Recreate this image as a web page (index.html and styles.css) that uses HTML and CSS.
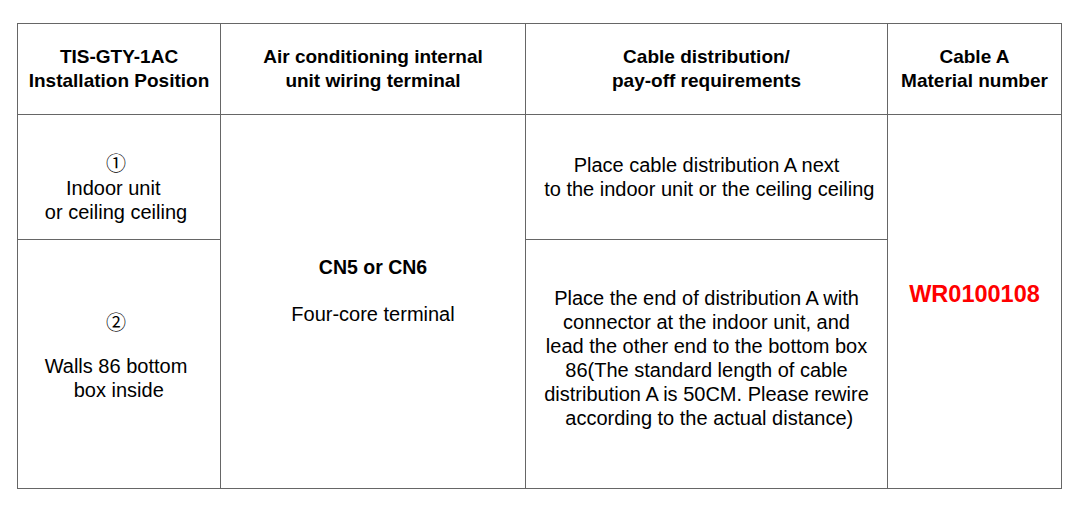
FILE: index.html
```html
<!DOCTYPE html>
<html>
<head>
<meta charset="utf-8">
<link rel="stylesheet" href="styles.css">
</head>
<body>
<div class="page">
  <table class="spec">
    <colgroup>
      <col class="c1"><col class="c2"><col class="c3"><col class="c4">
    </colgroup>
    <tr class="head">
      <th>TIS-GTY-1AC<br>Installation Position</th>
      <th>Air conditioning internal<br>unit wiring terminal</th>
      <th>Cable distribution/<br>pay-off requirements</th>
      <th>Cable A<br>Material number</th>
    </tr>
    <tr class="r2">
      <td class="pos1"><span class="num">①</span><br>Indoor unit&nbsp;<br>or ceiling ceiling</td>
      <td rowspan="2" class="term"><div class="cn">CN5 or CN6</div><div class="fc">Four-core terminal</div></td>
      <td>Place cable distribution A next<br>&nbsp;to the indoor unit or the ceiling ceiling</td>
      <td rowspan="2" class="mat">WR0100108</td>
    </tr>
    <tr class="r3">
      <td class="pos2"><div class="num2">②</div>Walls 86 bottom<br>&nbsp;box inside</td>
      <td class="long">Place the end of distribution A with<br>connector at the indoor unit, and<br>lead the other end to the bottom box<br>86(The standard length of cable<br>distribution A is 50CM. Please rewire<br>&nbsp;according to the actual distance)</td>
    </tr>
  </table>
</div>
</body>
</html>
```

FILE: styles.css
```css
html, body {
  margin: 0;
  padding: 0;
  background: #ffffff;
}
.page {
  padding: 23px 0 0 17px;
}
.spec {
  border-collapse: collapse;
  table-layout: fixed;
  width: 1044px;
  font-family: "Liberation Sans", Arial, sans-serif;
  color: #000;
}
.c1 { width: 203px; }
.c2 { width: 305px; }
.c3 { width: 362px; }
.c4 { width: 174px; }
.spec th, .spec td {
  border: 1px solid #666666;
  text-align: center;
  vertical-align: middle;
  padding: 0;
  font-size: 20px;
  line-height: 24px;
}
.spec th {
  font-size: 19px;
  font-weight: bold;
}
.head { height: 91px; }
.r2 { height: 125px; }
.r3 { height: 249px; }
.num {
  font-family: "Noto Sans CJK JP", "DejaVu Sans", sans-serif;
  font-size: 20px;
  line-height: 26px;
}
.spec td.pos1 { padding-top: 19px; padding-right: 6px; }
.num2 {
  font-family: "Noto Sans CJK JP", "DejaVu Sans", sans-serif;
  font-size: 20px;
  line-height: 24px;
  margin-bottom: 20px;
}
.spec td.pos2 { padding-bottom: 17px; padding-right: 6px; }
.spec td.term { padding-bottom: 23px; }
.cn {
  font-weight: bold;
  font-size: 19.5px;
  margin-bottom: 23px;
}
.spec td.long { padding-bottom: 13px; }
.spec td.mat {
  color: #ff0000;
  font-weight: bold;
  font-size: 23.5px;
  padding-bottom: 16px;
}
```
